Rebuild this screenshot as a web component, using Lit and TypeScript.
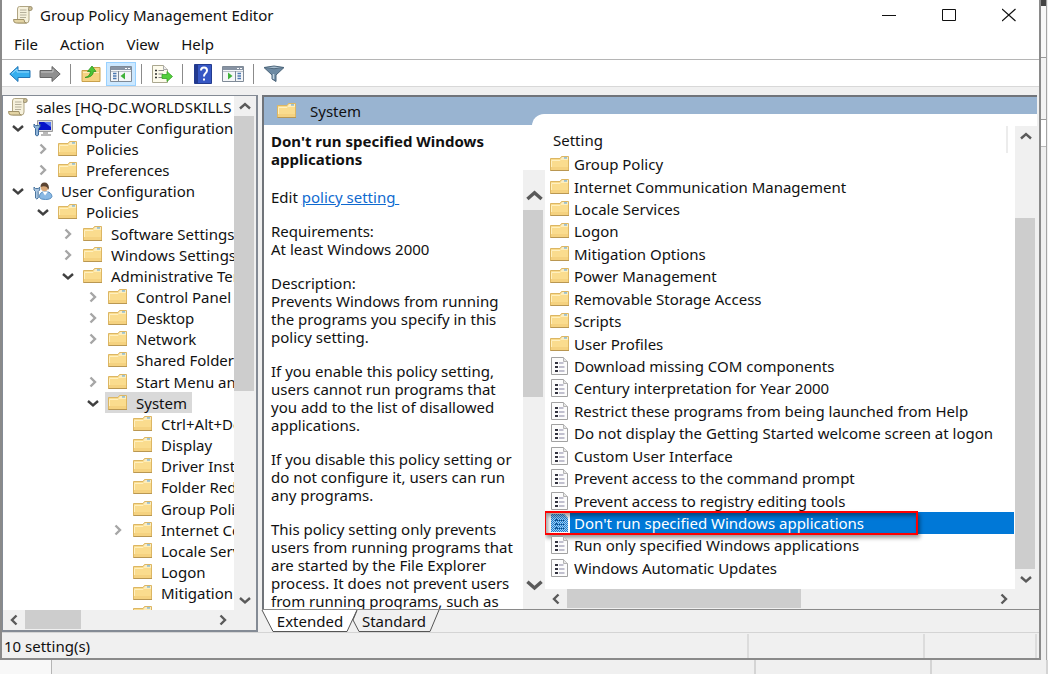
import { LitElement, html, css, nothing } from "lit";
import { customElement, property } from "lit/decorators.js";
import { classMap } from "lit/directives/class-map.js";

type Node = { text: string; level: number; icon: string; state?: "open" | "closed"; selected?: boolean };

const folder = html`<svg width="20" height="18" viewBox="0 0 20 18" aria-hidden="true">
  <path d="M.5 3.500h9.500l1.500-2h7v14H.5z" fill="#fadc8e" stroke="#dcb663" />
  <path d="M11 4l1.300-2h5.700v2.500h-7z" fill="#f7ecc8" />
  <path d="M14 3h3" stroke="#5fa6d6" stroke-width="1.200" />
  <path d="M1.500 14.500V5.500H10l1.200-1.200H18" fill="none" stroke="#fff0bf" />
  <path d="M1 12h17v3H1z" fill="#f5d280" />
  <path d="M.5 15.500h18.500" stroke="#b99752" />
</svg>`;

const scroll = html`<svg width="20" height="18" viewBox="0 0 20 18" aria-hidden="true">
  <path d="M6.500 .5h11q1.500 0 1.500 2T17.500 4.500H16V14q0 3-2.500 3H4.500V3Q4.500 .5 6.500 .5z" fill="#f6f1dc" stroke="#b0a583" />
  <path d="M15.500 4.500V2.500q0-2 1.800-2T19 2.500t-1.500 2z" fill="#cdbf94" stroke="#a1977a" />
  <path d="M.5 13.500h10.500q0 3.500 2.500 3.500H3Q.5 17 .5 13.500z" fill="#e3d4a4" stroke="#a1936a" />
  <path d="M7 4h6.500M7 6.500h6.500M7 9h6.500M7 11.500h6" stroke="#b5af9b" />
</svg>`;

const computer = html`<svg width="20" height="18" viewBox="0 0 20 18" aria-hidden="true">
  <path d="M4.500 1.500h15v11h-15z" fill="#dadada" stroke="#9c9c9c" />
  <path d="M6 3h12v8H6z" fill="#0713c9" />
  <path d="M11 3h7v5z" fill="#5b7cf0" />
  <path d="M10 13h5v2h3v2H8v-2h2z" fill="#b9b9b9" />
  <path d="M1 5v3l1.500 1.500V16q1.500 2 3 0V9.500L7 8V5L5.500 6.500h-3z" fill="#8fb4d8" stroke="#3e6c9c" />
</svg>`;

const user = html`<svg width="20" height="18" viewBox="0 0 20 18" aria-hidden="true">
  <path d="M6.500 15.500q-.5-5.500 5.500-6 6.500 0 7 5-1 3-6.500 3-5 0-6-2z" fill="#8ab9e4" stroke="#5b8fc0" />
  <path d="M9.500 9.500l2.500 4 3-4z" fill="#fff" />
  <circle cx="11.500" cy="5.500" r="3.700" fill="#d9a878" />
  <path d="M7.500 5q0-4.500 4-4.500T16 6l-1 2q0-3-2.500-3.500T7.500 5z" fill="#5a4433" />
  <path d="M1 5v3l1.500 1.500V16q1.300 2 2.700 0V9.500L6.700 8V5L5.500 6.500h-3z" fill="#a9c6e2" stroke="#4d779f" />
</svg>`;

const doc = html`<svg width="20" height="18" viewBox="0 0 20 18" aria-hidden="true">
  <path d="M1.500 .5h12l4 4v13h-16z" fill="#fcfcfc" stroke="#a2a2a2" />
  <path d="M13.500 .5v4h4" fill="#e6e6e6" stroke="#b4b4b4" />
  <path d="M5 5h3v2H5zM5 9h3v2H5zM5 13h3v2H5z" fill="#33333f" />
  <path d="M9 6h4.500M9 10h5.500M9 14h5.500" stroke="#8583a0" />
</svg>`;

const docSelected = html`<svg width="20" height="18" viewBox="0 0 20 18" aria-hidden="true">
  <defs><pattern id="dots" width="2" height="2" patternUnits="userSpaceOnUse">
    <path d="M0 0h1v1H0zM1 1h1v1H1z" fill="#1a80d4" /></pattern></defs>
  <path d="M1 0h13l4 4v14H1z" fill="#a9cdec" />
  <path d="M5 5h3v2H5zM5 9h3v2H5zM5 13h3v2H5zM9 6h5v1H9zM9 10h6v1H9zM9 14h6v1H9z" fill="#1c4674" />
  <path d="M1 0h13l4 4v14H1z" fill="url(#dots)" />
</svg>`;

const icons: Record<string, unknown> = { folder, scroll, computer, user, doc, docSelected };

const chevrons: Record<string, string> = {
  up: "M1 8.500L6 4l5 4.500",
  down: "M1 4l5 4.500L11 4",
  left: "M8.500 1.500L4 6l4.500 4.500",
  right: "M3.500 1.500L8 6l-4.500 4.500",
};
const chevron = (dir: string) => html`<svg class="chev" width="12" height="12" viewBox="0 0 12 12" aria-hidden="true">
  <path d=${chevrons[dir]} fill="none" stroke="currentColor" stroke-width="2.400" />
</svg>`;

const tree: Node[] = [
  { text: "sales [HQ-DC.WORLDSKILLS", level: 0, icon: "scroll" },
  { text: "Computer Configuration", level: 1, icon: "computer", state: "open" },
  { text: "Policies", level: 2, icon: "folder", state: "closed" },
  { text: "Preferences", level: 2, icon: "folder", state: "closed" },
  { text: "User Configuration", level: 1, icon: "user", state: "open" },
  { text: "Policies", level: 2, icon: "folder", state: "open" },
  { text: "Software Settings", level: 3, icon: "folder", state: "closed" },
  { text: "Windows Settings", level: 3, icon: "folder", state: "closed" },
  { text: "Administrative Templates", level: 3, icon: "folder", state: "open" },
  { text: "Control Panel", level: 4, icon: "folder", state: "closed" },
  { text: "Desktop", level: 4, icon: "folder", state: "closed" },
  { text: "Network", level: 4, icon: "folder", state: "closed" },
  { text: "Shared Folders", level: 4, icon: "folder" },
  { text: "Start Menu and Taskbar", level: 4, icon: "folder", state: "closed" },
  { text: "System", level: 4, icon: "folder", state: "open", selected: true },
  { text: "Ctrl+Alt+Del Options", level: 5, icon: "folder" },
  { text: "Display", level: 5, icon: "folder" },
  { text: "Driver Installation", level: 5, icon: "folder" },
  { text: "Folder Redirection", level: 5, icon: "folder" },
  { text: "Group Policy", level: 5, icon: "folder" },
  { text: "Internet Communication", level: 5, icon: "folder", state: "closed" },
  { text: "Locale Services", level: 5, icon: "folder" },
  { text: "Logon", level: 5, icon: "folder" },
  { text: "Mitigation Options", level: 5, icon: "folder" },
  { text: "Power Management", level: 5, icon: "folder" },
];

const folders = [
  "Group Policy", "Internet Communication Management", "Locale Services", "Logon", "Mitigation Options",
  "Power Management", "Removable Storage Access", "Scripts", "User Profiles",
];
const settings = [
  "Download missing COM components", "Century interpretation for Year 2000",
  "Restrict these programs from being launched from Help",
  "Do not display the Getting Started welcome screen at logon", "Custom User Interface",
  "Prevent access to the command prompt", "Prevent access to registry editing tools",
  "Don't run specified Windows applications", "Run only specified Windows applications",
  "Windows Automatic Updates",
];
const current = "Don't run specified Windows applications";

const base = css`
  * { box-sizing: border-box; }
  svg { display: block; flex: none; }
  button { font: inherit; color: inherit; border: 0; padding: 0; margin: 0; background: none; }
`;

@customElement("scroll-bar")
export class ScrollBar extends LitElement {
  @property({ type: Boolean, reflect: true }) horizontal = false;
  @property({ type: Number }) before = 0;
  @property({ type: Number }) thumb = 50;
  static styles = [base, css`
    :host { display: flex; flex-direction: column; width: 22px; background: #f0f0f0; color: #5a5a5a; flex: none; }
    :host([horizontal]) { flex-direction: row; width: auto; height: 20px; }
    button { flex: none; display: grid; place-items: center; height: var(--end, 20px); }
    button:first-child { padding-top: var(--inset, 0); }
    button:last-child { padding-bottom: var(--inset, 0); }
    :host([horizontal]) button { height: auto; width: 22px; }
    .track { flex: 1; display: flex; flex-direction: inherit; min-height: 0; min-width: 0; padding-right: 2px; }
    :host([horizontal]) .track { padding: 0 0 1px; }
    .thumb { background: #cdcdcd; }
    .chev { width: var(--chev, 12px); height: var(--chev, 12px); }
  `];
  render() {
    const h = this.horizontal;
    return html`
      <button aria-label=${h ? "Scroll left" : "Scroll up"}>${chevron(h ? "left" : "up")}</button>
      <div class="track">
        <div style="flex:${this.before}"></div>
        <div class="thumb" style="flex:${this.thumb}"></div>
        <div style="flex:${100 - this.before - this.thumb}"></div>
      </div>
      <button aria-label=${h ? "Scroll right" : "Scroll down"}>${chevron(h ? "right" : "down")}</button>`;
  }
}

@customElement("console-tree")
export class ConsoleTree extends LitElement {
  static styles = [base, css`
    :host { display: grid; grid-template: minmax(0, 1fr) auto / minmax(0, 1fr) auto;
      border: solid #848b95; border-width: 1px 2px 2px 1px; background: #fff; overflow: hidden; }
    .view { overflow: hidden; display: flex; flex-direction: column; min-height: 0; }
    ul { list-style: none; margin: 0 0 -15px; padding: 0; flex: 1; display: flex; flex-direction: column; }
    li { flex: 1; min-height: 21px; display: flex; align-items: center; padding-left: 2px; white-space: nowrap; }
    .indent { flex: none; }
    .twist { width: 25px; height: 20px; flex: none; display: grid; place-items: center; color: #a6a6a6; }
    .twist.open { color: #404040; }
    .item { display: flex; align-items: center; gap: 8px; height: 21px; padding: 0 5px 0 3px; }
    .selected { background: #d9d9d9; }
    .corner { background: #f0f0f0; }
  `];
  render() {
    return html`
      <div class="view"><ul role="tree">
        ${tree.map((n) => html`<li role="treeitem" aria-level=${n.level + 1}>
          <span class="indent" style="width:${Math.max(0, n.level - 1) * 25}px"></span>
          ${n.level === 0 ? nothing : html`<span class=${classMap({ twist: true, open: n.state === "open" })}>
            ${n.state ? chevron(n.state === "open" ? "down" : "right") : nothing}</span>`}
          <span class=${classMap({ item: true, selected: !!n.selected })}>${icons[n.icon]}<span>${n.text}</span></span>
        </li>`)}
      </ul></div>
      <scroll-bar .before=${0} .thumb=${58}></scroll-bar>
      <scroll-bar horizontal .before=${0} .thumb=${30}></scroll-bar>
      <div class="corner"></div>`;
  }
}

@customElement("policy-help")
export class PolicyHelp extends LitElement {
  static styles = [base, css`
    :host { display: grid; grid-template-columns: minmax(0, 1fr) auto; min-height: 0; overflow: hidden; }
    article { padding: 7px 0 0 7px; line-height: 18px; min-height: 0; overflow: hidden; white-space: nowrap; }
    h2 { font-size: inherit; margin: 0 0 20px; }
    p { margin: 0 0 16px; }
    a { color: #0f6ad0; }
    scroll-bar { margin-top: 45px; --end: 40px; --inset: 10px; --chev: 17px; }
  `];
  render() {
    return html`
      <article>
        <h2>Don't run specified Windows<br />applications</h2>
        <p>Edit <a href="#">policy setting&nbsp;</a></p>
        <p>Requirements:<br />At least Windows 2000</p>
        <p>Description:<br />Prevents Windows from running<br />the programs you specify in this<br />policy setting.</p>
        <p>If you enable this policy setting,<br />users cannot run programs that<br />you add to the list of disallowed<br />applications.</p>
        <p>If you disable this policy setting or<br />do not configure it, users can run<br />any programs.</p>
        <p>This policy setting only prevents<br />users from running programs that<br />are started by the File Explorer<br />process. It does not prevent users<br />from running programs, such as</p>
      </article>
      <scroll-bar .before=${0} .thumb=${52}></scroll-bar>`;
  }
}

@customElement("setting-list")
export class SettingList extends LitElement {
  static styles = [base, css`
    :host { display: grid; grid-template: minmax(0, 1fr) auto / minmax(0, 1fr) auto; background: #fff;
      padding-top: 12px; border-top-left-radius: 12px; min-height: 0; }
    .view { display: flex; flex-direction: column; min-height: 0; padding: 0 1px 10px 14px; }
    .head { display: flex; height: 27px; align-items: center; padding-left: 7px; flex: none;
      border-right: 2px solid #ececec; margin-right: 6px; }
    ul { list-style: none; margin: 0; padding: 0; flex: 1; display: flex; flex-direction: column; }
    li { flex: 1; min-height: 22px; display: flex; align-items: center; padding-left: 4px; position: relative; white-space: nowrap; }
    .label { flex: 1; padding-left: 4px; align-self: stretch; display: flex; align-items: center; }
    .selected .label { background: #0078d7; color: #fff; }
    .callout { position: absolute; left: -2px; right: 96px; top: -1px; bottom: -1px; border: 2px solid #fe0000;
      box-shadow: 2px 3px 4px #0006, inset 2px 3px 4px #0006; }
    .hbar { margin-left: 13px; }
    .corner { background: #f0f0f0; }
  `];
  render() {
    const row = (text: string, icon: string, selected = false) => html`
      <li class=${classMap({ selected })}>${icons[icon]}<span class="label">${text}</span>
        ${selected ? html`<span class="callout"></span>` : nothing}</li>`;
    return html`
      <div class="view">
        <div class="head">Setting</div>
        <ul>
          ${folders.map((t) => row(t, "folder"))}
          ${settings.map((t) => (t === current ? row(t, "docSelected", true) : row(t, "doc")))}
        </ul>
      </div>
      <scroll-bar .before=${17} .thumb=${83}></scroll-bar>
      <scroll-bar class="hbar" horizontal .before=${0} .thumb=${55}></scroll-bar>
      <div class="corner"></div>`;
  }
}

@customElement("app-root")
export class AppRoot extends LitElement {
  static styles = [base, css`
    :host { display: grid; grid-template: minmax(0, 1fr) 14px / minmax(0, 1fr) 7px; height: 100vh; background: #f0f0f0;
      font: 15px/18px "Noto Sans", "Open Sans", sans-serif; color: #111; overflow: hidden; }
    .window { display: flex; flex-direction: column; min-height: 0; background: #f0f0f0;
      border: solid #8a8a8a; border-width: 0 2px 2px; }
    .title { background: #fff; display: flex; align-items: center; height: 29px; padding-left: 11px; gap: 7px; flex: none; }
    .title h1 { font: inherit; margin: 0; flex: 1; }
    .controls { display: flex; }
    .controls button { width: 60px; height: 29px; display: grid; place-items: center; }
    nav { background: #fff; height: 31px; display: flex; align-items: center; gap: 22px; padding-left: 12px;
      border-bottom: 1px solid #b5b5b5; flex: none; }
    .tools { background: #fff; height: 27px; display: flex; align-items: flex-end; padding-left: 3px; border-bottom: 1px solid #d8d8d8; flex: none; }
    .tools button { width: 30px; height: 24px; display: grid; place-items: center; }
    .tools .on { background: #cce8ff; border: 1px solid #99d1ff; }
    .tools i { width: 1px; height: 20px; background: #8b8b8b; margin: 0 5px 2px; }
    .main { flex: 1; min-height: 0; display: grid; grid-template-columns: 256px minmax(0, 1fr); gap: 4px; padding: 8px 0 0; }
    .right { display: flex; flex-direction: column; min-height: 0; }
    .pane { flex: 1; min-height: 0; display: grid; grid-template: 28px minmax(0, 1fr) / 281px minmax(0, 1fr);
      border: solid #70747a; border-width: 2px 0 0 2px; margin-right: 2px; background: #fff; }
    .band { grid-column: 1 / 3; grid-row: 1; background: #99b4d1; display: flex; align-items: center; gap: 13px; padding-left: 13px; }
    policy-help { grid-column: 1; grid-row: 2; z-index: 2; }
    setting-list { grid-column: 2; grid-row: 1 / 3; margin: 17px 0 0 -13px; z-index: 1; }
    .tabs { display: flex; height: 23px; flex: none; border-top: 1px solid #8a8a8a; }
    .tabs button { position: relative; height: 22px; width: 96px; }
    .tabs button + button { width: 82px; margin-left: -5px; }
    .tabs svg { position: absolute; inset: 0; overflow: visible; }
    .tabs span { position: relative; }
    .status { flex: none; height: 26px; display: grid; grid-template-columns: minmax(0, 1fr) 176px 112px; border-top: 1px solid #d4d4d4; padding-right: 2px; align-items: center; }
    .status span { padding-left: 2px; border-right: 2px solid #dcdcdc; height: 24px; display: flex; align-items: center; }
    .side { display: flex; flex-direction: column; border-right: 1px solid #a5a5a5; background: #f0f0f0; margin-right: 1px; }
    .side div:nth-child(1) { height: 6px; background: #444; }
    .side div:nth-child(2) { height: 52px; background: #f8f8f8; border-bottom: 1px solid #999; }
    .side div:nth-child(3) { height: 62px; background: #f4f4f4; border-bottom: 1px solid #999; }
    .side div:nth-child(4) { height: 27px; background: #fff; border-bottom: 1px solid #bbb; }
    .below { grid-column: 1 / 3; display: grid; grid-template-columns: 52px minmax(0, 1fr) 176px 116px; }
    .below div { border-right: 2px solid #d4d4d4; }
    .below div:first-child { background: #f8f8f8; border-right: 1px solid #b5b5b5; }
  `];
  render() {
    return html`
      <main class="window">
        <header class="title">${scroll}<h1>Group Policy Management Editor</h1>
          <div class="controls">
          <button aria-label="Minimize"><svg width="14" height="14"><path d="M0 7.500h14" stroke="#111" /></svg></button>
          <button aria-label="Maximize"><svg width="14" height="14"><path d="M.5 1.500h13v11H.5z" fill="none" stroke="#111" /></svg></button>
          <button aria-label="Close"><svg width="14" height="14"><path d="M0 1l13.500 12M13.500 1L0 13" stroke="#111" stroke-width="1.200" /></svg></button>
          </div>
        </header>
        <nav><button>File</button><button>Action</button><button>View</button><button>Help</button></nav>
        <div class="tools">
          <button aria-label="Back"><svg width="22" height="18" viewBox="0 0 22 18">
            <path d="M.8 9L9 1.500v4h12v7H9v4z" fill="#35aeee" stroke="#2274b5" /><path d="M3 8.500L8 4v3h12" fill="none" stroke="#9adcff" /></svg></button>
          <button aria-label="Forward"><svg width="22" height="18" viewBox="0 0 22 18">
            <path d="M21.200 9L13 1.500v4H1v7h12v4z" fill="#8f8f8f" stroke="#666" /><path d="M2 7h12V4" fill="none" stroke="#c4c4c4" /></svg></button>
          <i></i>
          <button aria-label="Up one level"><svg width="20" height="18" viewBox="0 0 20 18">
            <path d="M1 5.500h9l2-3h7v14H1z" fill="#f6d382" stroke="#c9a14c" /><path d="M2 7.500h16" stroke="#fdebbb" />
            <path d="M4 12.500q5-1 5.500-6H6.500L11 1l4 5.500h-2.500Q12 12.500 4 12.500z" fill="#4cc435" stroke="#2d9420" stroke-width=".8" /></svg></button>
          <button class="on" aria-label="Show console tree"><svg width="22" height="16" viewBox="0 0 22 16">
            <path d="M.5 .5h21v15H.5z" fill="#f4f6f8" stroke="#7f8a97" /><path d="M1 1h20v3H1z" fill="#8793a3" />
            <path d="M15 2.500h2M18 2.500h2" stroke="#fff" /><path d="M1 5.500h20" stroke="#b9c0c9" /><path d="M8.500 5v10" stroke="#7f8a97" />
            <path d="M3 7.500h3.500M3 10h3.500M3 12.500h3.500" stroke="#4c78b0" stroke-width="1.300" /><path d="M15 6.500v7L10.500 10z" fill="#3fb23a" /></svg></button>
          <i></i>
          <button aria-label="Export list"><svg width="22" height="18" viewBox="0 0 22 18">
            <path d="M1.500 .5h11l4 4v13h-15z" fill="#fdfbec" stroke="#aaa78f" /><path d="M12.500 .5v4h4" fill="#eee" stroke="#aaa" />
            <path d="M4 5.500h2M4 9h2M4 12.500h2" stroke="#333" stroke-width="1.400" /><path d="M7.500 5.500H13M7.500 9H12M7.500 12.500H11" stroke="#8a8a8a" />
            <path d="M11 9.500h5V6.500l5.500 5-5.500 5v-3h-5z" fill="#54cf3c" stroke="#36a327" stroke-width=".8" /></svg></button>
          <i></i>
          <button aria-label="Help"><svg width="18" height="20" viewBox="0 0 18 20">
            <path d="M.5 .5h17v19H.5z" fill="#3657c4" stroke="#233b8f" /><path d="M1 1h3v18H1z" fill="#22398f" />
            <path d="M7 6.500Q7 3.500 10 3.500t3 3q0 1.500-1.500 2.700T10 12.500M10 14.500v2" fill="none" stroke="#fff" stroke-width="2" /></svg></button>
          <button aria-label="Show action pane"><svg width="22" height="16" viewBox="0 0 22 16">
            <path d="M.5 .5h21v15H.5z" fill="#f4f6f8" stroke="#7f8a97" /><path d="M1 1h20v3H1z" fill="#8793a3" />
            <path d="M15 2.500h2M18 2.500h2" stroke="#fff" /><path d="M1 5.500h20" stroke="#b9c0c9" /><path d="M13.500 5v10" stroke="#7f8a97" />
            <path d="M15.500 7.500H19M15.500 10H19M15.500 12.500H19" stroke="#4c78b0" stroke-width="1.300" /><path d="M6 6.500v7l4.500-3.500z" fill="#3fb23a" /></svg></button>
          <i></i>
          <button aria-label="Filter"><svg width="22" height="18" viewBox="0 0 22 18">
            <path d="M1 2.500h20L13 10v6.500L9 14v-4z" fill="#6d8aa3" stroke="#4a6378" /><path d="M1 2.500q10-3 20 0-10 2.500-20 0z" fill="#a9bfd0" stroke="#4f687d" />
            <path d="M10.500 9v5" stroke="#c3d5e2" stroke-width="1.500" /></svg></button>
        </div>
        <div class="main">
          <console-tree></console-tree>
          <div class="right">
            <div class="pane">
              <div class="band">${folder}<span>System</span></div>
              <policy-help></policy-help>
              <setting-list></setting-list>
            </div>
            <div class="tabs">
              <button><svg width="96" height="22"><path d="M0 0l11 21.500h74L95 0" fill="#fff" stroke="#555" /></svg><span>Extended</span></button>
              <button><svg width="82" height="22"><path d="M4 .5L0 10l6 11.500h71L86 0" fill="#f0f0f0" stroke="#555" /></svg><span>Standard</span></button>
            </div>
          </div>
        </div>
        <footer class="status"><span>10 setting(s)</span><span></span><span></span></footer>
      </main>
      <div class="side"><div></div><div></div><div></div><div></div></div>
      <div class="below"><div></div><div></div><div></div><div></div></div>`;
  }
}
